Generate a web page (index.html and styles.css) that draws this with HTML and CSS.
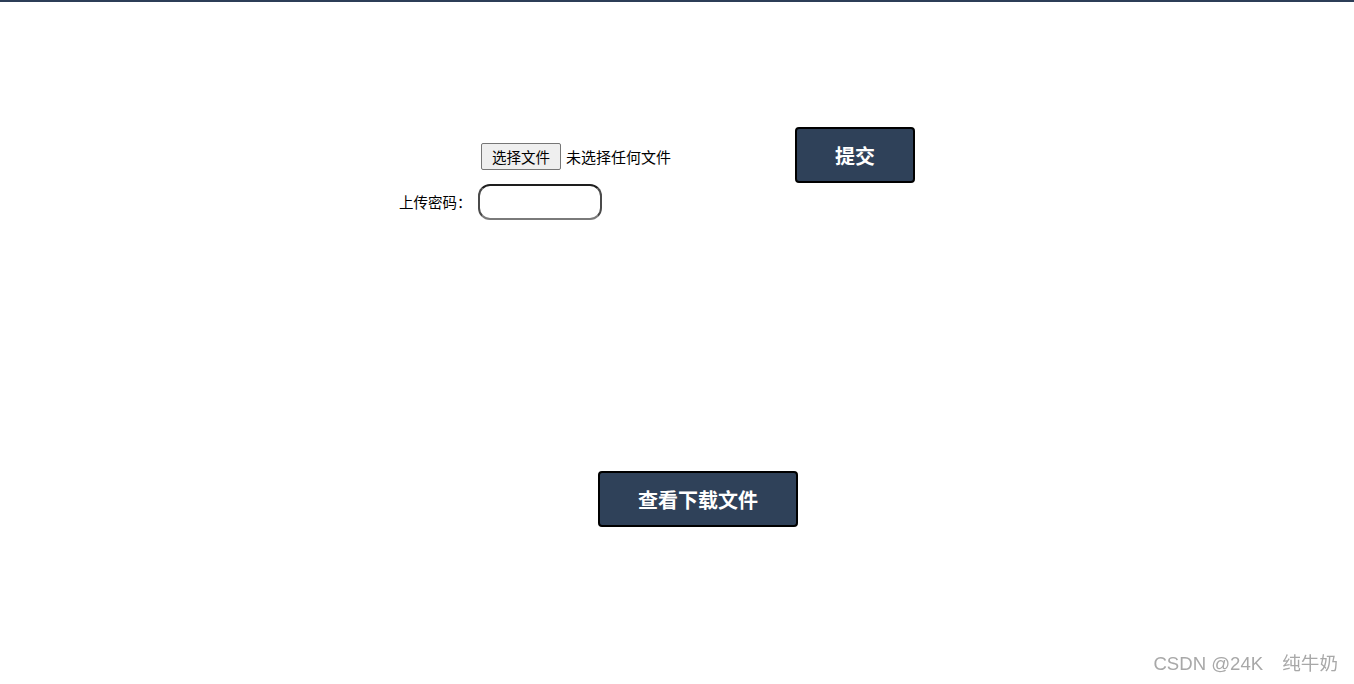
FILE: index.html
```html
<!DOCTYPE html>
<html lang="zh-CN">
<head>
<meta charset="utf-8">
<title>上传文件</title>
<link rel="stylesheet" href="styles.css">
</head>
<body>
<div class="topbar"></div>
<main class="page">
  <form class="upload" onsubmit="return false;">
    <div class="fields">
      <div class="row file-row">
        <span class="label"></span>
        <label class="file-control">
          <input type="file" class="file-input">
          <span class="file-btn">选择文件</span>
          <span class="file-name">未选择任何文件</span>
        </label>
      </div>
      <div class="row pwd-row">
        <span class="label">上传密码：</span>
        <input type="password" class="pwd">
      </div>
    </div>
    <button type="submit" class="btn btn-submit">提交</button>
  </form>
  <div class="download">
    <button type="button" class="btn btn-download">查看下载文件</button>
  </div>
</main>
<div class="watermark">CSDN @24K<span class="wm-name">纯牛奶</span></div>
</body>
</html>
```
FILE: styles.css
```css
html, body {
  margin: 0;
  padding: 0;
  background: #ffffff;
}
body {
  font-family: "Liberation Sans", "Noto Sans CJK SC", sans-serif;
  color: #000;
  width: 1354px;
  height: 684px;
  overflow: hidden;
}
.topbar {
  height: 2px;
  background: #2c3e57;
}
.page {
  padding-top: 125px;
}
.upload {
  display: flex;
  align-items: flex-start;
  margin: 0 0 0 399px;
}
.fields {
  width: 396px;
  padding-top: 16px;
  display: flex;
  flex-direction: column;
  gap: 14px;
}
.row {
  display: flex;
  align-items: center;
}
.label {
  width: 68px;
  font-family: "Noto Sans CJK SC", sans-serif;
  font-size: 14.5px;
  line-height: 20px;
  white-space: nowrap;
  margin-right: 12px;
}
.file-row .label {
  width: 82px;
  margin-right: 0;
}
.file-control {
  display: flex;
  align-items: center;
  cursor: pointer;
}
.file-input {
  display: none;
}
.file-btn {
  box-sizing: border-box;
  width: 80px;
  height: 27px;
  display: flex;
  align-items: center;
  justify-content: center;
  background: #efefef;
  border: 1px solid #767676;
  border-radius: 2px;
  font-family: "Noto Sans CJK SC", sans-serif;
  font-size: 14.5px;
  color: #000;
}
.file-name {
  margin-left: 5px;
  font-family: "Noto Sans CJK SC", sans-serif;
  font-size: 15px;
  line-height: 20px;
}
.pwd {
  box-sizing: border-box;
  width: 124px;
  height: 36px;
  margin: 0 0 0 -1px;
  padding: 0 10px;
  border: 2px solid;
  border-color: #1e1e1e #4a4a4a #7a7a7a #4a4a4a;
  border-radius: 12px;
  background: #fff;
  outline: none;
}
.btn {
  box-sizing: border-box;
  height: 56px;
  margin: 0;
  padding: 0;
  background: #2f4159;
  border: 2px solid #000;
  border-radius: 4px;
  color: #ffffff;
  font-family: "Noto Sans CJK SC", sans-serif;
  font-weight: 700;
  font-size: 20px;
  cursor: pointer;
}
.btn-submit {
  width: 120px;
}
.download {
  margin: 251px 0 0 598px;
}
.btn-download {
  width: 200px;
}
.watermark {
  position: fixed;
  right: 16px;
  bottom: 8px;
  font-family: "Liberation Sans", "Noto Sans CJK SC", sans-serif;
  font-size: 18.6px;
  line-height: 24px;
  color: #a8a8a8;
  white-space: nowrap;
}
.wm-name {
  margin-left: 19px;
  font-family: "Noto Sans CJK SC", sans-serif;
}
```
